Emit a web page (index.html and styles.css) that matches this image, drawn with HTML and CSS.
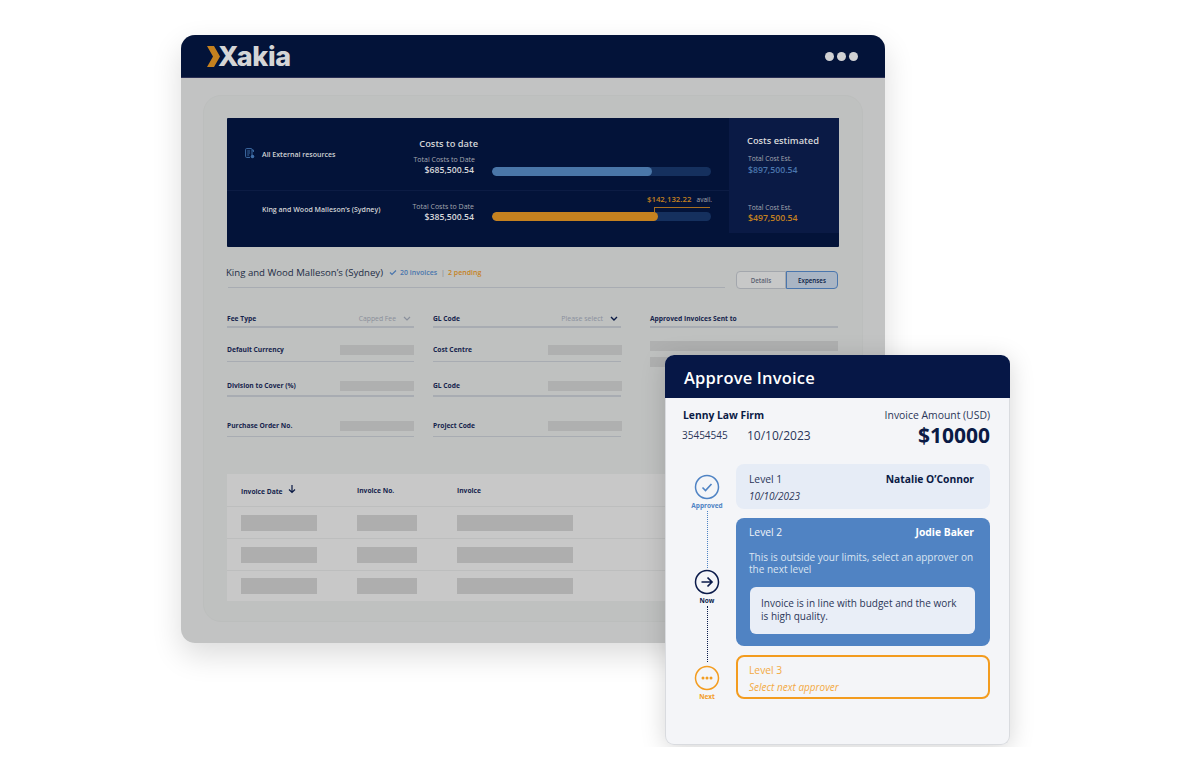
FILE: index.html
```html
<!DOCTYPE html>
<html lang="en">
<head>
<meta charset="utf-8">
<title>Xakia</title>
<link rel="stylesheet" href="styles.css">
</head>
<body>
<div class="stage">
  <section class="window">
    <header class="win-head">
      <div class="logo">
        <svg class="logo-mark" viewBox="0 0 13 21"><path d="M0 0h7l6 10.500-6 10.500H0l6-10.500z"/></svg>
        <span class="logo-text">Xakia</span>
      </div>
      <div class="dots"><i></i><i></i><i></i></div>
    </header>
    <div class="win-body">
      <div class="panel">
        <div class="costs">
          <div class="costs-main">
            <div class="cost-row first">
              <div class="res">
                <svg class="res-icon" viewBox="0 0 10 11"><path d="M7 7V1.500Q7 .600 6 .600H1.500Q.600 .600 .600 1.500V8.500Q.600 9.400 1.500 9.400H5M7 2h1.400v2M2.200 3h3M2.200 5h3M2.200 7h2" fill="none" stroke="#3f6ea6" stroke-width="1"/><circle cx="7.500" cy="8.500" r="1.800" fill="#3f6ea6"/></svg>
                <span>All External resources</span>
              </div>
              <div class="amt">
                <h3>Costs to date</h3>
                <small>Total Costs to Date</small>
                <b>$685,500.54</b>
              </div>
              <div class="bar-wrap">
                <div class="bar"><div class="fill blue"></div></div>
              </div>
            </div>
            <div class="cost-row second">
              <div class="res"><span>King and Wood Malleson’s (Sydney)</span></div>
              <div class="amt">
                <small>Total Costs to Date</small>
                <b>$385,500.54</b>
              </div>
              <div class="bar-wrap">
                <div class="avail"><b>$142,132.22</b> <span>avail.</span></div>
                <div class="bracket"></div>
                <div class="bar"><div class="fill orange"></div></div>
              </div>
            </div>
          </div>
          <div class="costs-est">
            <h3>Costs estimated</h3>
            <div class="est e1"><small>Total Cost Est.</small><b class="c-blue">$897,500.54</b></div>
            <div class="est e2"><small>Total Cost Est.</small><b class="c-orange">$497,500.54</b></div>
          </div>
        </div>

        <div class="title-row">
          <div class="title-left">
            <span class="firm">King and Wood Malleson’s (Sydney)</span>
            <svg class="tick" viewBox="0 0 8 7"><path d="M1 3.500l2 2 4-4" fill="none" stroke="#4a76ad" stroke-width="1.200"/></svg>
            <span class="c-blue inv">20 invoices</span>
            <span class="sep">|</span>
            <span class="c-orange inv">2 pending</span>
          </div>
          <div class="tabs"><span class="tab">Details</span><span class="tab on">Expenses</span></div>
        </div>

        <div class="fields">
          <div class="col">
            <div class="field f-top"><label>Fee Type</label><span class="sel">Capped Fee<svg viewBox="0 0 8 5"><path d="M1 1l3 3 3-3" fill="none" stroke="#8a909c" stroke-width="1.200"/></svg></span></div>
            <div class="field f-2"><label>Default Currency</label><i class="ph"></i></div>
            <div class="field f-3"><label>Division to Cover (%)</label><i class="ph"></i></div>
            <div class="field f-4"><label>Purchase Order No.</label><i class="ph"></i></div>
          </div>
          <div class="col col-2">
            <div class="field f-top"><label>GL Code</label><span class="sel dim">Please select<svg viewBox="0 0 8 5"><path d="M1 1l3 3 3-3" fill="none" stroke="#0a1a45" stroke-width="1.400"/></svg></span></div>
            <div class="field f-2"><label>Cost Centre</label><i class="ph"></i></div>
            <div class="field f-3"><label>GL Code</label><i class="ph"></i></div>
            <div class="field f-4"><label>Project Code</label><i class="ph"></i></div>
          </div>
          <div class="col col-3">
            <div class="field f-top"><label>Approved Invoices Sent to</label></div>
            <i class="ph wide"></i>
            <i class="ph wide"></i>
          </div>
        </div>

        <div class="table">
          <div class="thead">
            <span class="c1">Invoice Date <svg viewBox="0 0 8 9"><path d="M4 0v7.500M1 4.500l3 3 3-3" fill="none" stroke="#0a1a45" stroke-width="1.200"/></svg></span>
            <span class="c2">Invoice No.</span>
            <span class="c3">Invoice</span>
          </div>
          <div class="trow"><i class="c1"></i><i class="c2"></i><i class="c3"></i></div>
          <div class="trow"><i class="c1"></i><i class="c2"></i><i class="c3"></i></div>
          <div class="trow last"><i class="c1"></i><i class="c2"></i><i class="c3"></i></div>
        </div>
      </div>
    </div>
  </section>

  <section class="card">
    <header class="card-head">Approve Invoice</header>
    <div class="card-body">
      <div class="summary">
        <div>
          <div class="law">Lenny Law Firm</div>
          <div class="meta"><span class="num">35454545</span><span class="date">10/10/2023</span></div>
        </div>
        <div class="total">
          <div class="total-label">Invoice Amount (USD)</div>
          <div class="total-val">$10000</div>
        </div>
      </div>
      <div class="flow">
        <div class="rail">
          <div class="step s-blue">
            <svg viewBox="0 0 26 26"><circle cx="13" cy="13" r="11.500" fill="none" stroke="#4f83c4" stroke-width="1.500"/><path d="M8.500 13.500l3 3 6-6.500" fill="none" stroke="#4f83c4" stroke-width="1.600"/></svg>
            <span>Approved</span>
          </div>
          <div class="line l-blue"></div>
          <div class="step s-navy">
            <svg viewBox="0 0 26 26"><circle cx="13" cy="13" r="11.500" fill="none" stroke="#0a1a4a" stroke-width="1.500"/><path d="M7.500 13h10M13.500 8.500l4.500 4.500-4.500 4.500" fill="none" stroke="#0a1a4a" stroke-width="1.700"/></svg>
            <span>Now</span>
          </div>
          <div class="line l-navy"></div>
          <div class="step s-orange">
            <svg viewBox="0 0 26 26"><circle cx="13" cy="13" r="11.500" fill="none" stroke="#f39c1f" stroke-width="1.500"/><circle cx="9" cy="13" r="1.500" fill="#f39c1f"/><circle cx="13" cy="13" r="1.500" fill="#f39c1f"/><circle cx="17" cy="13" r="1.500" fill="#f39c1f"/></svg>
            <span>Next</span>
          </div>
        </div>
        <div class="levels">
          <div class="level l1">
            <div class="lvl-top"><span>Level 1</span><b>Natalie O’Connor</b></div>
            <em>10/10/2023</em>
          </div>
          <div class="level l2">
            <div class="lvl-top"><span>Level 2</span><b>Jodie Baker</b></div>
            <p>This is outside your limits, select an approver on the next level</p>
            <div class="note">Invoice is in line with budget and the work is high quality.</div>
          </div>
          <div class="level l3">
            <div class="lvl-top"><span>Level 3</span></div>
            <em>Select next approver</em>
          </div>
        </div>
      </div>
    </div>
  </section>
</div>
</body>
</html>
```

FILE: styles.css
```css
* { box-sizing: border-box; }
html, body { margin: 0; padding: 0; background: #fff; }
body { font-family: "Open Sans", "Noto Sans", sans-serif; color: #0a1a45; }
h3, p { margin: 0; }
i { font-style: normal; display: block; }
small { display: block; }

.stage { position: relative; width: 1200px; height: 782px; overflow: hidden; }

/* Background window */
.window {
  position: absolute; left: 181px; top: 35px; width: 704px; height: 608px;
  border-radius: 14px; overflow: hidden; background: #c2c3c3;
}
.stage::before {
  content: ""; position: absolute; left: 181px; top: 35px; width: 704px; height: 608px;
  border-radius: 14px; box-shadow: 0 12px 30px rgba(0,0,0,.14);
}
.win-head {
  height: 43px; background: #031339; border-bottom: 1px solid #2a2f55;
  display: flex; align-items: center; justify-content: space-between;
  padding: 0 27px 0 26px;
}
.logo { display: flex; align-items: center; }
.logo-mark { width: 13px; height: 21px; fill: #c5811f; margin-right: -2px; }
.logo-text { font-family: Inter, sans-serif; font-weight: 800; font-size: 27px; letter-spacing: -0.3px; color: #d4d5d6; line-height: 21px; }
.dots { display: flex; gap: 3px; }
.dots i { width: 9px; height: 9px; border-radius: 50%; background: #d0d1d3; }

.win-body { padding: 17px 0 0 22px; }
.panel {
  width: 660px; height: 527px; padding: 22px 23px 0 23px;
  background: #bfc1c0; border: 1px solid #bcbebd; border-radius: 18px;
}

/* Costs */
.costs { height: 129px; background: #031339; display: flex; width: 612px; border-radius: 1px; }
.costs-main { width: 502px; }
.cost-row { display: flex; position: relative; }
.cost-row.first { height: 73px; border-bottom: 1px solid #0c1c44; }
.cost-row.second { height: 56px; }
.res { width: 172px; display: flex; color: #d2d3d5; font-size: 7px; font-weight: 600; padding-left: 35px; position: relative; }
.first .res { padding-top: 32px; }
.second .res { padding-top: 14px; }
.res-icon { position: absolute; left: 18px; top: 30px; width: 10px; height: 11px; }
.amt { width: 75px; text-align: right; display: flex; flex-direction: column; align-items: flex-end; position: relative; }
.first .amt { padding-top: 20px; }
.second .amt { padding-top: 11px; }
.amt h3 { font-size: 9.300px; font-weight: 600; color: #d4d5d7; line-height: 12px; margin-right: -4px; white-space: nowrap; margin-bottom: 5px; }
.amt small { font-size: 7px; color: #a5a8b0; line-height: 10px; white-space: nowrap; }
.first .amt small { margin-right: -1px; }
.amt b { font-size: 8.700px; font-weight: 600; color: #d7d8da; line-height: 10.500px; }
.bar-wrap { width: 219px; margin-left: 18px; position: relative; }
.first .bar-wrap { padding-top: 49px; }
.second .bar-wrap { padding-top: 2px; }
.bar { height: 9px; border-radius: 5px; background: #15305e; overflow: hidden; }
.fill { height: 9px; border-radius: 5px; }
.fill.blue { width: 160px; background: #4a76a8; }
.fill.orange { width: 166px; background: #c5811f; }
.avail { text-align: right; line-height: 11px; height: 11px; white-space: nowrap; margin: -2px -1px 0 0; }
.avail b { color: #c5811f; font-size: 7.800px; font-weight: 600; }
.avail span { color: #a5a8b0; font-size: 6.500px; margin-left: 1px; }
.bracket { height: 5px; width: 56px; margin: 5px 1px 0 auto; border: 1px solid #a86f20; border-width: 1px 0 0 1px; }

.costs-est { width: 110px; background: #0a1a45; height: 115px; padding: 17px 0 0 18px; flex: none; }
.costs-est h3 { font-size: 9.300px; font-weight: 600; color: #d6d7d9; line-height: 12px; margin-bottom: 7px; white-space: nowrap; }
.est small { font-size: 6.700px; color: #a5a8b0; line-height: 10px; margin-left: 1px; }
.est b { display: block; font-size: 8.700px; font-weight: 600; line-height: 12px; margin-left: 1px; }
.est.e1 { height: 49px; }
.est.e2 b { margin-top: -1px; }
.c-blue { color: #4a76ad; }
.c-orange { color: #c5811f; }

/* Title */
.title-row { display: flex; position: relative; width: 612px; margin-top: 15px; height: 27px; align-items: flex-start; justify-content: space-between; }
.title-left { display: flex; align-items: center; height: 21px; width: 498px; white-space: nowrap; }
.title-row::after { content: ""; position: absolute; left: 1px; top: 25px; width: 497px; height: 1px; background: #a8acb2; }
.firm { font-size: 9.600px; color: #222c45; margin-left: -1px; }
.tick { width: 8px; height: 7px; margin: 0 3px 0 6px; }
.inv { font-size: 7px; font-weight: 600; }
.sep { font-size: 7px; color: #7a7f8a; margin: 0 3px 0 4px; }
.tabs { display: flex; margin: 9px 1px 0 0; height: 18px; }
.tab {
  width: 50px; height: 18px; border: 1px solid #a3a7ad; border-radius: 4px 0 0 4px; background: #c7c8c8;
  font-size: 6.200px; font-weight: 600; color: #5b6272; display: flex; align-items: center; justify-content: center;
}
.tab.on { width: 52px; border: 1.500px solid #4a76ad; border-radius: 0 4px 4px 0; background: #a9b5c4; color: #0a1a45; }

/* Fields */
.fields { display: flex; margin-top: 7px; width: 612px; }
.col { width: 187px; margin-right: 19px; }
.col-2 { width: 188px; margin-right: 29px; }
.col-3 { width: 188px; margin-right: 0; }
.field { display: flex; align-items: center; justify-content: space-between; border-bottom: 1px solid #a8acb2; }
.field label { font-size: 6.700px; font-weight: 700; color: #16244d; white-space: nowrap; }
.f-top { height: 32px; padding-top: 14px; border-bottom-width: 2px; }
.f-2 { height: 34px; padding-top: 10px; }
.f-3 { height: 35px; padding-top: 14px; border-bottom-width: 2px; }
.f-4 { height: 40px; padding-top: 18px; }
.ph { width: 74px; height: 10px; background: #afb0b0; }
.col-2 .ph { margin-right: -1px; }
.sel { display: flex; align-items: center; font-size: 6.800px; color: #8a8f9a; padding-right: 3px; }
.sel svg { width: 8px; height: 5px; margin-left: 7px; }
.sel.dim { font-size: 7px; color: #8a909d; }
.col-3 .ph.wide { width: 188px; height: 10px; margin-right: 0; }
.col-3 .ph.wide:nth-of-type(1) { margin-top: 13px; }
.col-3 .ph.wide + .ph.wide { margin-top: 6px; }

/* Table */
.table { margin-top: 37px; width: 612px; background: #c8c8c8; }
.thead { display: flex; height: 33px; align-items: center; border-bottom: 1px solid #bdbebe; font-size: 6.700px; font-weight: 700; color: #16244d; }
.thead svg { width: 8px; height: 9px; margin-left: 4px; }
.c1, .c2, .c3 { display: block; flex: none; }
.thead .c1 { margin-left: 14px; width: 116px; }
.thead .c2 { width: 100px; }
.trow { display: flex; height: 32px; align-items: center; border-bottom: 1px solid #bdbebe; }
.trow.last { border-bottom: 0; height: 30px; }
.trow i { height: 16px; background: #aeaeae; }
.trow .c1 { width: 76px; margin: 0 40px 0 14px; }
.trow .c2 { width: 60px; margin-right: 40px; }
.trow .c3 { width: 116px; }

/* Card */
.card {
  position: absolute; left: 665px; top: 355px; width: 345px; height: 390px;
  border-radius: 9px; background: #f4f5f8;
  box-shadow: 0 4px 24px rgba(0,0,0,.17);
  clip-path: inset(-40px -40px -2px -40px);
}
.card-head {
  height: 43px; background: #061746; color: #fff; border-radius: 9px 9px 0 0;
  font-size: 16.500px; font-weight: 600; line-height: 46px; padding-left: 19px; letter-spacing: .2px;
}
.card-body {
  height: 347px; padding: 9px 19px 0 17px;
  border: 1px solid #d9dbdf; border-top: 0; border-radius: 0 0 9px 9px;
}
.summary { display: flex; justify-content: space-between; height: 57px; }
.law { font-size: 10.300px; font-weight: 700; color: #0a1a45; line-height: 15px; padding-top: 1px; height: 16px; }
.meta { display: flex; align-items: center; height: 20px; margin-top: 2px; margin-left: -1px; color: #2b3658; }
.num { font-size: 10px; width: 65px; }
.date { font-size: 12px; }
.total { text-align: right; }
.total-label { font-size: 10.400px; color: #2b3658; line-height: 15px; padding-top: 1px; height: 16px; }
.total-val { font-size: 21px; font-weight: 700; color: #0a1a45; line-height: 26px; margin-top: -1px; }

.flow { display: flex; }
.rail { width: 52px; margin: 0 3px 0 -2px; display: flex; flex-direction: column; align-items: center; padding-top: 10px; flex: none; }
.step { display: flex; flex-direction: column; align-items: center; }
.step svg { width: 26px; height: 26px; display: block; }
.step span { font-size: 6.500px; font-weight: 700; line-height: 10px; margin-top: 1px; }
.s-blue span { color: #4f83c4; }
.s-navy span { color: #0a1a4a; }
.s-orange span { color: #f39c1f; }
.line { width: 0; border-left: 1px dotted; }
.l-blue { height: 57px; border-color: #4f83c4; margin-bottom: 1px; }
.l-navy { height: 56px; border-color: #0a1a4a; margin-bottom: 3px; }

.levels { width: 254px; display: flex; flex-direction: column; gap: 9px; }
.level { border-radius: 8px; padding: 7px 16px 0 13px; }
.lvl-top { display: flex; justify-content: space-between; font-size: 10.300px; line-height: 15px; }
.lvl-top b { font-weight: 700; }
.level em { display: block; font-size: 10px; line-height: 15px; margin-top: 2px; }
.l1 { height: 45px; padding-top: 8px; background: #e6ecf6; color: #2b3658; }
.l1 b { color: #0a1a45; }
.l2 { height: 128px; background: #5083c3; color: #f0f3f8; }
.l2 b { color: #fff; }
.l2 p { font-size: 10px; line-height: 12px; margin-top: 11px; color: #dbe5f2; }
.note {
  margin: 12px 0 0 1px; width: 225px; height: 47px; padding: 10px 11px; background: #e9eef7;
  border-radius: 6px; font-size: 10px; line-height: 12.500px; color: #2b3658;
}
.l3 { height: 44px; border: 2px solid #f39c1f; background: #f4f5f8; color: #f3aa43; padding: 6px 11px; }
```
